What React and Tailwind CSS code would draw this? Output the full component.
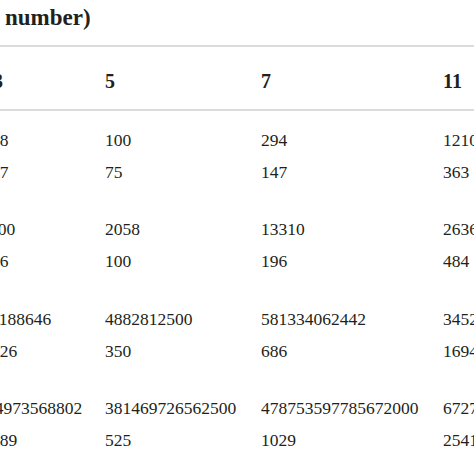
const groups = [
  [
    ["18", "100", "294", "12100"],
    ["27", "75", "147", "363"],
  ],
  [
    ["100", "2058", "13310", "26364"],
    ["36", "100", "196", "484"],
  ],
  [
    ["7188646", "4882812500", "581334062442", "34522712143931"],
    ["126", "350", "686", "1694"],
  ],
  [
    ["14973568802", "381469726562500", "478753597785672000", "672749994932560009201"],
    ["189", "525", "1029", "2541"],
  ],
];

// small nudges so the cut-off first column shows the same fragments
const firstShift = {
  "100": "ml-[-4px]",
  "7188646": "ml-[-3px]",
  "14973568802": "ml-[-7px]",
};

const cols = "grid grid-cols-[112px_156px_182px_1fr]";

export default function App() {
  return (
    <div
      className="w-[474px] h-[474px] overflow-hidden bg-white text-[#231f20]"
      style={{ fontFamily: '"Liberation Serif", "Times New Roman", serif' }}
    >
      <div className="h-[45px] pt-[6px] pl-[5px] text-[23px] leading-[23px] font-bold whitespace-nowrap">
        number)
      </div>
      <div className="border-t-2 border-[#dcdcdc]" />
      <div className={`${cols} ml-[-7px] h-[62px] items-center pt-[5px] text-[20px] font-bold`}>
        <div>3</div>
        <div>5</div>
        <div>7</div>
        <div>11</div>
      </div>
      <div className="border-t-2 border-[#dcdcdc]" />
      <div className="flex flex-col gap-y-[25.5px] pt-[13px] ml-[-7px] text-[17.5px]">
        {groups.map((rows, gi) => (
          <div key={gi}>
            {rows.map((r, ri) => (
              <div key={ri} className={`${cols} h-[32px] items-center whitespace-nowrap`}>
                {r.map((v, ci) => (
                  <div key={ci} className={ci === 0 ? firstShift[v] || "ml-[-2px]" : ""}>
                    {v}
                  </div>
                ))}
              </div>
            ))}
          </div>
        ))}
      </div>
    </div>
  );
}
